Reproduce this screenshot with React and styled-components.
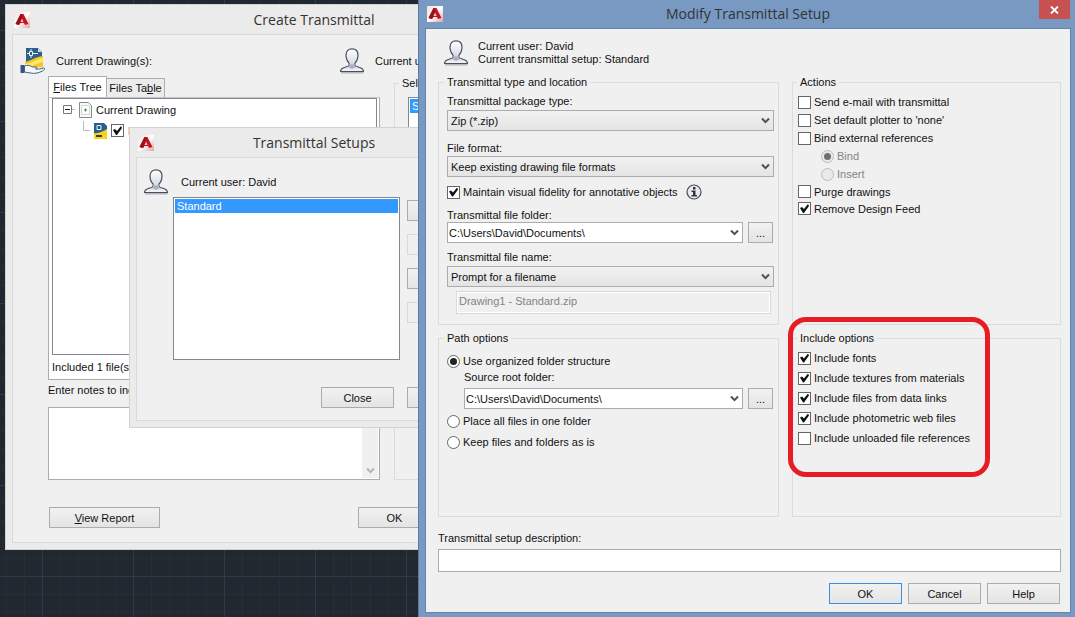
import styled, { createGlobalStyle, css } from "styled-components";

const GlobalStyle = createGlobalStyle`
  * {
    box-sizing: border-box;
  }
  body {
    margin: 0;
    overflow: hidden;
    color: #111;
    font-family: "Liberation Sans", Arial, sans-serif;
    font-size: 11px;
    line-height: 14px;
  }
  button, input, select, textarea {
    margin: 0;
    color: inherit;
    font: inherit;
  }
`;

// CAD canvas, one major line every 91px and four minor ones between
const lines = (dir) => `linear-gradient(${dir}, #323a47 0 1px, transparent 1px 18px,
  #272e38 18px 19px, transparent 19px 36px, #272e38 36px 37px, transparent 37px 55px,
  #272e38 55px 56px, transparent 56px 73px, #272e38 73px 74px, transparent 74px)`;

const Desktop = styled.main`
  position: relative;
  min-height: 100vh;
  overflow: hidden;
  background: ${lines("to right")} 42px 30px / 91px 91px,
    ${lines("to bottom")} 42px 30px / 91px 91px, #212830;
`;

const Window = styled.section`
  position: absolute;
  display: flex;
  flex-direction: column;
  padding: 0 6px 6px;
  border: 1px solid #d2d2d2;
  background: #ebebeb;
`;
const CreateWindow = styled(Window)`
  left: 5px;
  top: 4px;
  width: 618px;
  height: 546px;
`;
const SetupsWindow = styled(Window)`
  left: 129px;
  top: 127px;
  width: 370px;
  height: 301px;
`;
const ModifyWindow = styled(Window)`
  left: 418px;
  right: 0;
  top: 0;
  min-height: 100vh;
  padding: 0 4px 4px 6px;
  border-width: 0 0 0 1px;
  border-color: #5d7ba3;
  background: #7899c1;
`;

const TitleBar = styled.header`
  display: grid;
  grid-template-columns: 30px 1fr 32px;
  align-items: center;
  height: ${(p) => (p.$active ? 28 : 29)}px;
  padding-left: 2px;
  h2 {
    margin: 0;
    color: #333;
    font: 400 14px/20px "Open Sans", "Noto Sans", sans-serif;
    text-align: center;
  }
`;
const CloseX = styled.button`
  display: flex;
  align-items: center;
  justify-content: center;
  align-self: start;
  width: 31px;
  height: 19px;
  padding: 0;
  border: 0;
  background: #c75050;
`;
const Client = styled.div`
  flex: 1;
  border: 1px solid ${(p) => (p.$active ? "#6684ab" : "#d9d9d9")};
  background: #f0f0f0;
`;

const Button = styled.button`
  flex: none;
  width: ${(p) => p.$w || 73}px;
  height: 21px;
  padding: 0;
  border: 1px solid ${(p) => (p.$main ? "#3c8fdc" : "#acacac")};
  background: linear-gradient(#f1f1f1, #e4e4e4);
  &:disabled {
    border-color: #d9d9d9;
    background: #efefef;
    color: #838383;
  }
`;

const Group = styled.fieldset`
  min-width: 0;
  min-height: ${(p) => p.$h}px;
  margin: 0;
  padding: ${(p) => p.$pad || "5px 4px 0 8px"};
  border: 1px solid #dcdcdc;
  legend {
    padding: 0 3px;
    margin-left: ${(p) => p.$legend || -3}px;
  }
`;

const UserRow = styled.div`
  display: flex;
  align-items: center;
  gap: ${(p) => p.$gap || 11}px;
  p {
    margin: 0;
    line-height: 13px;
  }
`;

const mark = css`
  appearance: none;
  display: grid;
  place-items: center;
  flex: none;
  width: 13px;
  height: 13px;
  border: 1px solid #666;
  background: #fff;
`;
const Tick = styled.input`
  ${mark}
  &:checked::before {
    content: "";
    width: 9px;
    height: 9px;
    background: #111;
    clip-path: polygon(0 4px, 2px 3px, 4px 5px, 8px 0, 9px 2px, 4px 9px, 3px 9px);
  }
`;
const Dot = styled.input`
  ${mark}
  border-radius: 50%;
  &:checked::before {
    content: "";
    width: 7px;
    height: 7px;
    border-radius: 50%;
    background: #222;
  }
  &:disabled {
    border-color: #bcbcbc;
    background: #e9e9e9;
  }
  &:disabled::before {
    background: #707070;
  }
`;
const Choice = styled.label`
  display: flex;
  align-items: center;
  gap: 3px;
  height: ${(p) => p.$h || 18}px;
  padding-left: ${(p) => (p.$sub ? 23 : 0)}px;
  color: ${(p) => (p.$sub ? "#838383" : "inherit")};
`;

const FieldLabel = styled.label`
  display: block;
  padding: ${(p) => p.$pad || "0"};
`;
const SelectBox = styled.div`
  display: grid;
  flex: 1;
  align-items: center;
  select,
  svg {
    grid-area: 1 / 1;
  }
  select {
    appearance: none;
    width: 100%;
    height: 21px;
    padding: 0 20px 0 ${(p) => (p.$white ? 1 : 3)}px;
    border: 1px solid #acacac;
    border-radius: 0;
    background: ${(p) => (p.$white ? "#fff" : "linear-gradient(#f1f1f1, #e4e4e4)")};
  }
  svg {
    justify-self: end;
    margin-right: 4px;
    pointer-events: none;
  }
`;
const PathRow = styled.div`
  display: flex;
  gap: 5px;
  padding: 0 1px 0 ${(p) => (p.$sub ? 17 : 0)}px;
`;
const FileName = styled.input`
  display: block;
  width: calc(100% - 12px);
  height: 23px;
  margin: 4px 0 0 9px;
  padding: 0 2px 3px;
  border: 1px solid #d9d9d9;
  background: #f0f0f0;
  box-shadow: inset 0 0 0 1px #fff;
  color: #838383;
`;
const FidelityRow = styled.div`
  display: flex;
  align-items: center;
  gap: 8px;
  height: 30px;
`;

const ModifyBody = styled.form`
  display: flex;
  flex-direction: column;
  padding: 11px 9px 8px 12px;
`;
const ModifyUser = styled(UserRow)`
  padding-left: 6px;
`;
const Columns = styled.div`
  display: grid;
  grid-template-columns: 341fr 269fr;
  gap: 6px 13px;
  margin-top: 9px;
`;
const IncludeArea = styled.div`
  position: relative;
`;
const IncludeList = styled.div`
  display: flex;
  flex-direction: column;
  gap: 2px;
`;
const RedMark = styled.div`
  position: absolute;
  left: -4px;
  top: -14px;
  width: 202px;
  height: 160px;
  border: 5px solid #e81c24;
  border-radius: 18px;
  pointer-events: none;
`;
const Description = styled.input`
  width: 100%;
  height: 23px;
  margin-top: 4px;
  padding: 0 3px;
  border: 1px solid #acacac;
  background: #fff;
`;
const Buttons = styled.div`
  display: flex;
  justify-content: flex-end;
  gap: 6px;
  margin-top: 11px;
  padding-right: 1px;
`;

const CreateBody = styled.div`
  display: grid;
  grid-template-columns: 332px 1fr;
  column-gap: 14px;
  padding: 11px 14px 0 35px;
`;
const CreateHead = styled.div`
  display: grid;
  grid-column: 1 / -1;
  grid-template-columns: 320px 1fr;
  height: 30px;
  margin-left: -28px;
`;
const Tabs = styled.div`
  display: flex;
  align-items: flex-end;
  height: 21px;
`;
const Tab = styled.button`
  width: ${(p) => (p.$on ? 59 : 58)}px;
  height: ${(p) => (p.$on ? 21 : 19)}px;
  padding: 0;
  border: 1px solid #acacac;
  border-bottom: 0;
  border-left-width: ${(p) => (p.$on ? 1 : 0)}px;
  background: ${(p) => (p.$on ? "#fff" : "#ececec")};
  white-space: nowrap;
`;
const TabPanel = styled.div`
  height: 283px;
  padding: 0 2px 0 3px;
  border: 1px solid #acacac;
  border-top-color: #c6c6c6;
  background: #fff;
`;
const Tree = styled.ul`
  height: 257px;
  margin: 0 0 5px;
  padding: 0 0 0 10px;
  border: 1px solid #828790;
  list-style: none;
  li {
    display: flex;
    align-items: center;
    gap: 4px;
    height: 21px;
  }
  li + li {
    padding-left: 20px;
  }
`;
const Notes = styled.div`
  display: flex;
  height: 73px;
  border: 1px solid #acacac;
  background: #fff;
  textarea {
    flex: 1;
    border: 0;
    resize: none;
  }
`;
const ScrollTrack = styled.div`
  display: flex;
  align-items: flex-end;
  justify-content: center;
  width: 16px;
  margin: 1px;
  padding-bottom: 4px;
  background: #f0f0f0;
`;
const List = styled.ul`
  height: ${(p) => p.$h}px;
  margin: 0;
  padding: 1px;
  border: 1px solid #828790;
  background: #fff;
  list-style: none;
  li {
    height: 14px;
    padding-left: 2px;
    background: #3399ff;
    color: #fff;
  }
`;
const CreateFoot = styled.div`
  display: flex;
  gap: 198px;
  grid-column: 1 / -1;
  margin: 27px 0 0 1px;
`;

const SetupsBody = styled.div`
  padding: 11px 18px 0 7px;
`;
const SetupsGrid = styled.div`
  display: grid;
  grid-template-columns: 227px 73px;
  gap: 7px;
  margin: 2px 0 0 29px;
`;
const SideButtons = styled.div`
  display: flex;
  flex-direction: column;
  gap: 13px;
  padding-top: 3px;
`;
const SetupsFoot = styled.div`
  display: flex;
  gap: 13px;
  margin: 27px 0 0 177px;
`;

const Logo = () => (
  <svg width="16" height="16" viewBox="0 0 16 16">
    <defs>
      <linearGradient id="tile" x1="0" y1="0" x2="1" y2="1">
        <stop offset="0" stopColor="#f3dcdc" />
        <stop offset="0.5" stopColor="#fff" />
        <stop offset="1" stopColor="#dba3a5" />
      </linearGradient>
    </defs>
    <path d="M0 0h16v16H0z" fill="url(#tile)" />
    <path d="M6.500 2h3L14.500 12l-3.500 1L10 11H6.500L5 13 1.500 12z" fill="#c4161e" />
    <path d="M6.500 2 1.500 12 5 13l2-4 1-4-.5-3z" fill="#97121a" />
    <path d="m8 6.500 1.500 3.500h-3z" fill="#f0c9c9" />
  </svg>
);

const Person = () => (
  <svg width="24" height="26" viewBox="0 0 24 26">
    <defs>
      <linearGradient id="skin" x1="0" y1="0" x2="0" y2="1">
        <stop offset="0" stopColor="#fff" />
        <stop offset="0.7" stopColor="#d5dae2" />
        <stop offset="1" stopColor="#f4f5f8" />
      </linearGradient>
    </defs>
    <path d="M1 24.500h22.500" stroke="#b4b6bb" strokeWidth="2" />
    <path
      d="M12 .8c-4 0-6 2.600-6 6.200 0 3.600 1.300 6.300 3 8 .6 1.500.2 2.600-1 3.200L3 20c-1.700.7-2.400 1.900-2.500 3.500h23c-.1-1.600-.8-2.800-2.500-3.500l-5-1.800c-1.200-.6-1.600-1.700-1-3.200 1.700-1.700 3-4.400 3-8 0-3.600-2-6.200-6-6.200z"
      fill="url(#skin)"
      stroke="#494f5c"
      strokeWidth="1.200"
    />
    <path d="M9 15.200c2 1.600 4 1.600 6 0-.4 2 .2 3 1.500 3.600L12 21l-4.500-2.200C8.800 18.200 9.400 17 9 15.200z" fill="#a9b0be" />
  </svg>
);

const HandDrawing = () => (
  <svg width="25" height="28" viewBox="0 0 25 28">
    <path d="M6 1h12l4 4v13H6z" fill="#2f608d" />
    <path d="M18 1v4h4" fill="#c5d9e9" />
    <path d="M5 15c5-1 10-5 18-6v11H5z" fill="#f5c91c" />
    <path d="M5 17c6 0 11-5 18-6v4c-6 1-10 5-18 5z" fill="#ffe76d" />
    <path d="M9.500 4.500h3v4h-3zM11 2v2.500M11 8.500V11M7 6.500h2.500M12.500 6.500H18" fill="none" stroke="#e8f2fa" />
    <path d="M.5 18h4v8h-4z" fill="#31557f" />
    <path d="M4.500 19c3-1 5-1 8 1h4c1 1 0 2-1 2h4l4-1c2 0 1 2-1 3-4 2-8 3-12 2l-6-1z" fill="#f4f8fc" stroke="#45617f" />
  </svg>
);

const SheetIcon = () => (
  <svg width="13" height="16" viewBox="0 0 13 16">
    <path d="M.5.5h9l3 3v12H.5z" fill="#fafafa" stroke="#8b8b8b" />
    <path d="M2.500 3.500h8v9h-8z" fill="#fff" stroke="#d5d5d5" />
    <path d="M5 8h3M6.500 6.500v3" stroke="#28963b" />
  </svg>
);

const DwgIcon = () => (
  <svg width="13" height="16" viewBox="0 0 13 16">
    <path d="M0 0h10l3 3v13H0z" fill="#285f8d" />
    <path d="M0 10c5 1 9-2 13-4v10H0z" fill="#f5d41f" />
    <path d="M3 2.500h4v4H3z" fill="none" stroke="#e7f2fb" />
    <path d="M2 13h6" stroke="#453d18" strokeWidth="2" />
  </svg>
);

const Arrow = ({ color = "#505050" }) => (
  <svg width="9" height="7" viewBox="0 0 9 7">
    <path d="m1 1.500 3.500 3.600L8 1.500" fill="none" stroke={color} strokeWidth="2" />
  </svg>
);

const InfoIcon = () => (
  <svg width="16" height="16" viewBox="0 0 16 16" role="img" aria-label="Information">
    <circle cx="8" cy="8" r="7" fill="#e8eaf2" stroke="#474b59" strokeWidth="1.200" />
    <path d="M7 3h2.500v2.500H7zM5.500 6.500h4V11H11v1.500H5.500V11H7V8H5.500z" fill="#30343f" />
  </svg>
);

const Expander = () => (
  <svg width="12" height="9" viewBox="0 0 12 9">
    <path d="M.5.5h8v8h-8z" fill="#fff" stroke="#777" />
    <path d="M2 4.500h5" stroke="#222" />
    <path d="M9 4.500h3" stroke="#bbb" />
  </svg>
);

const Branch = () => (
  <svg width="7" height="20" viewBox="0 0 7 20">
    <path d="M.5 0v9.500H7" fill="none" stroke="#bbb" />
  </svg>
);

const Check = ({ text, checked, h }) => (
  <Choice $h={h}>
    <Tick type="checkbox" defaultChecked={checked} />
    {text}
  </Choice>
);

const Dropdown = ({ id, value, white }) => (
  <SelectBox $white={white}>
    <select id={id} defaultValue={value}>
      <option>{value}</option>
    </select>
    <Arrow />
  </SelectBox>
);

const ACTIONS = ["Send e-mail with transmittal", "Set default plotter to 'none'", "Bind external references"];

const INCLUDES = [
  { text: "Include fonts", checked: true },
  { text: "Include textures from materials", checked: true },
  { text: "Include files from data links", checked: true },
  { text: "Include photometric web files", checked: true },
  { text: "Include unloaded file references", checked: false },
];

const CreateTransmittal = () => (
  <CreateWindow>
    <TitleBar>
      <Logo />
      <h2>Create Transmittal</h2>
    </TitleBar>
    <Client>
      <CreateBody>
        <CreateHead>
          <UserRow>
            <HandDrawing />
            <p>Current Drawing(s):</p>
          </UserRow>
          <UserRow>
            <Person />
            <p>Current user:</p>
          </UserRow>
        </CreateHead>
        <div>
          <Tabs>
            <Tab $on>
              <u>F</u>iles Tree
            </Tab>
            <Tab>
              Files Ta<u>b</u>le
            </Tab>
          </Tabs>
          <TabPanel>
            <Tree>
              <li>
                <Expander />
                <SheetIcon />
                Current Drawing
              </li>
              <li>
                <Branch />
                <DwgIcon />
                <Tick type="checkbox" defaultChecked aria-label="Drawing1.dwg" />
                Drawing1.dwg
              </li>
            </Tree>
            Included 1 file(s)
          </TabPanel>
          <FieldLabel htmlFor="notes" $pad="3px 0 10px">
            Enter notes to include:
          </FieldLabel>
          <Notes>
            <textarea id="notes" />
            <ScrollTrack>
              <Arrow color="#b5b5b5" />
            </ScrollTrack>
          </Notes>
        </div>
        <Group $h={403} $pad="7px 13px 0" $legend={-9}>
          <legend>Select</legend>
          <List $h={110}>
            <li>Setup</li>
          </List>
        </Group>
        <CreateFoot>
          <Button $w={111}>
            <u>V</u>iew Report
          </Button>
          <Button>OK</Button>
        </CreateFoot>
      </CreateBody>
    </Client>
  </CreateWindow>
);

const TransmittalSetups = () => (
  <SetupsWindow>
    <TitleBar>
      <Logo />
      <h2>Transmittal Setups</h2>
    </TitleBar>
    <Client>
      <SetupsBody>
        <UserRow $gap={13}>
          <Person />
          <p>Current user: David</p>
        </UserRow>
        <SetupsGrid>
          <List $h={163}>
            <li>Standard</li>
          </List>
          <SideButtons>
            <Button aria-label="New" />
            <Button aria-label="Rename" disabled />
            <Button aria-label="Modify" />
            <Button aria-label="Delete" disabled />
          </SideButtons>
        </SetupsGrid>
        <SetupsFoot>
          <Button>Close</Button>
          <Button aria-label="Help" />
        </SetupsFoot>
      </SetupsBody>
    </Client>
  </SetupsWindow>
);

const ModifySetup = () => (
  <ModifyWindow>
    <TitleBar $active>
      <Logo />
      <h2>Modify Transmittal Setup</h2>
      <CloseX aria-label="Close">
        <svg width="9" height="8" viewBox="0 0 9 8">
          <path d="m1 .5 7 7M8 .5l-7 7" stroke="#fff" strokeWidth="1.800" />
        </svg>
      </CloseX>
    </TitleBar>
    <Client $active>
      <ModifyBody onSubmit={(e) => e.preventDefault()}>
        <ModifyUser $gap={10}>
          <Person />
          <p>
            Current user: David
            <br />
            Current transmittal setup: Standard
          </p>
        </ModifyUser>
        <Columns>
          <Group $h={250}>
            <legend>Transmittal type and location</legend>
            <FieldLabel htmlFor="type" $pad="0 0 2px">
              Transmittal package type:
            </FieldLabel>
            <Dropdown id="type" value="Zip (*.zip)" />
            <FieldLabel htmlFor="format" $pad="10px 0 1px">
              File format:
            </FieldLabel>
            <Dropdown id="format" value="Keep existing drawing file formats" />
            <FidelityRow>
              <Check text="Maintain visual fidelity for annotative objects" checked />
              <InfoIcon />
            </FidelityRow>
            <FieldLabel htmlFor="folder" $pad="1px 0 0">
              Transmittal file folder:
            </FieldLabel>
            <PathRow>
              <Dropdown id="folder" value="C:\Users\David\Documents\" white />
              <Button type="button" $w={25}>
                ...
              </Button>
            </PathRow>
            <FieldLabel htmlFor="name" $pad="7px 0 2px">
              Transmittal file name:
            </FieldLabel>
            <Dropdown id="name" value="Prompt for a filename" />
            <FileName disabled defaultValue="Drawing1 - Standard.zip" aria-label="File name" />
          </Group>
          <Group $h={250} $pad="4px 5px 0" $legend={-1}>
            <legend>Actions</legend>
            {ACTIONS.map((text) => (
              <Check key={text} text={text} />
            ))}
            <Choice $sub>
              <Dot type="radio" name="bind" disabled defaultChecked />
              Bind
            </Choice>
            <Choice $sub>
              <Dot type="radio" name="bind" disabled />
              Insert
            </Choice>
            <Check text="Purge drawings" h={17} />
            <Check text="Remove Design Feed" h={17} checked />
          </Group>
          <Group $h={186} $pad="7px 4px 0 8px">
            <legend>Path options</legend>
            <Choice>
              <Dot type="radio" name="path" defaultChecked />
              Use organized folder structure
            </Choice>
            <FieldLabel htmlFor="root" $pad="0 0 4px 17px">
              Source root folder:
            </FieldLabel>
            <PathRow $sub>
              <Dropdown id="root" value="C:\Users\David\Documents\" white />
              <Button type="button" $w={25}>
                ...
              </Button>
            </PathRow>
            <Choice $h={24}>
              <Dot type="radio" name="path" />
              Place all files in one folder
            </Choice>
            <Choice>
              <Dot type="radio" name="path" />
              Keep files and folders as is
            </Choice>
          </Group>
          <IncludeArea>
            <Group $h={186} $pad="4px 5px 0" $legend={-1}>
              <legend>Include options</legend>
              <IncludeList>
                {INCLUDES.map((item) => (
                  <Check key={item.text} {...item} />
                ))}
              </IncludeList>
            </Group>
            <RedMark />
          </IncludeArea>
        </Columns>
        <FieldLabel htmlFor="description" $pad="14px 0 0">
          Transmittal setup description:
        </FieldLabel>
        <Description id="description" />
        <Buttons>
          <Button $main>OK</Button>
          <Button type="button">Cancel</Button>
          <Button type="button">Help</Button>
        </Buttons>
      </ModifyBody>
    </Client>
  </ModifyWindow>
);

export default function App() {
  return (
    <>
      <GlobalStyle />
      <Desktop>
        <CreateTransmittal />
        <TransmittalSetups />
        <ModifySetup />
      </Desktop>
    </>
  );
}
